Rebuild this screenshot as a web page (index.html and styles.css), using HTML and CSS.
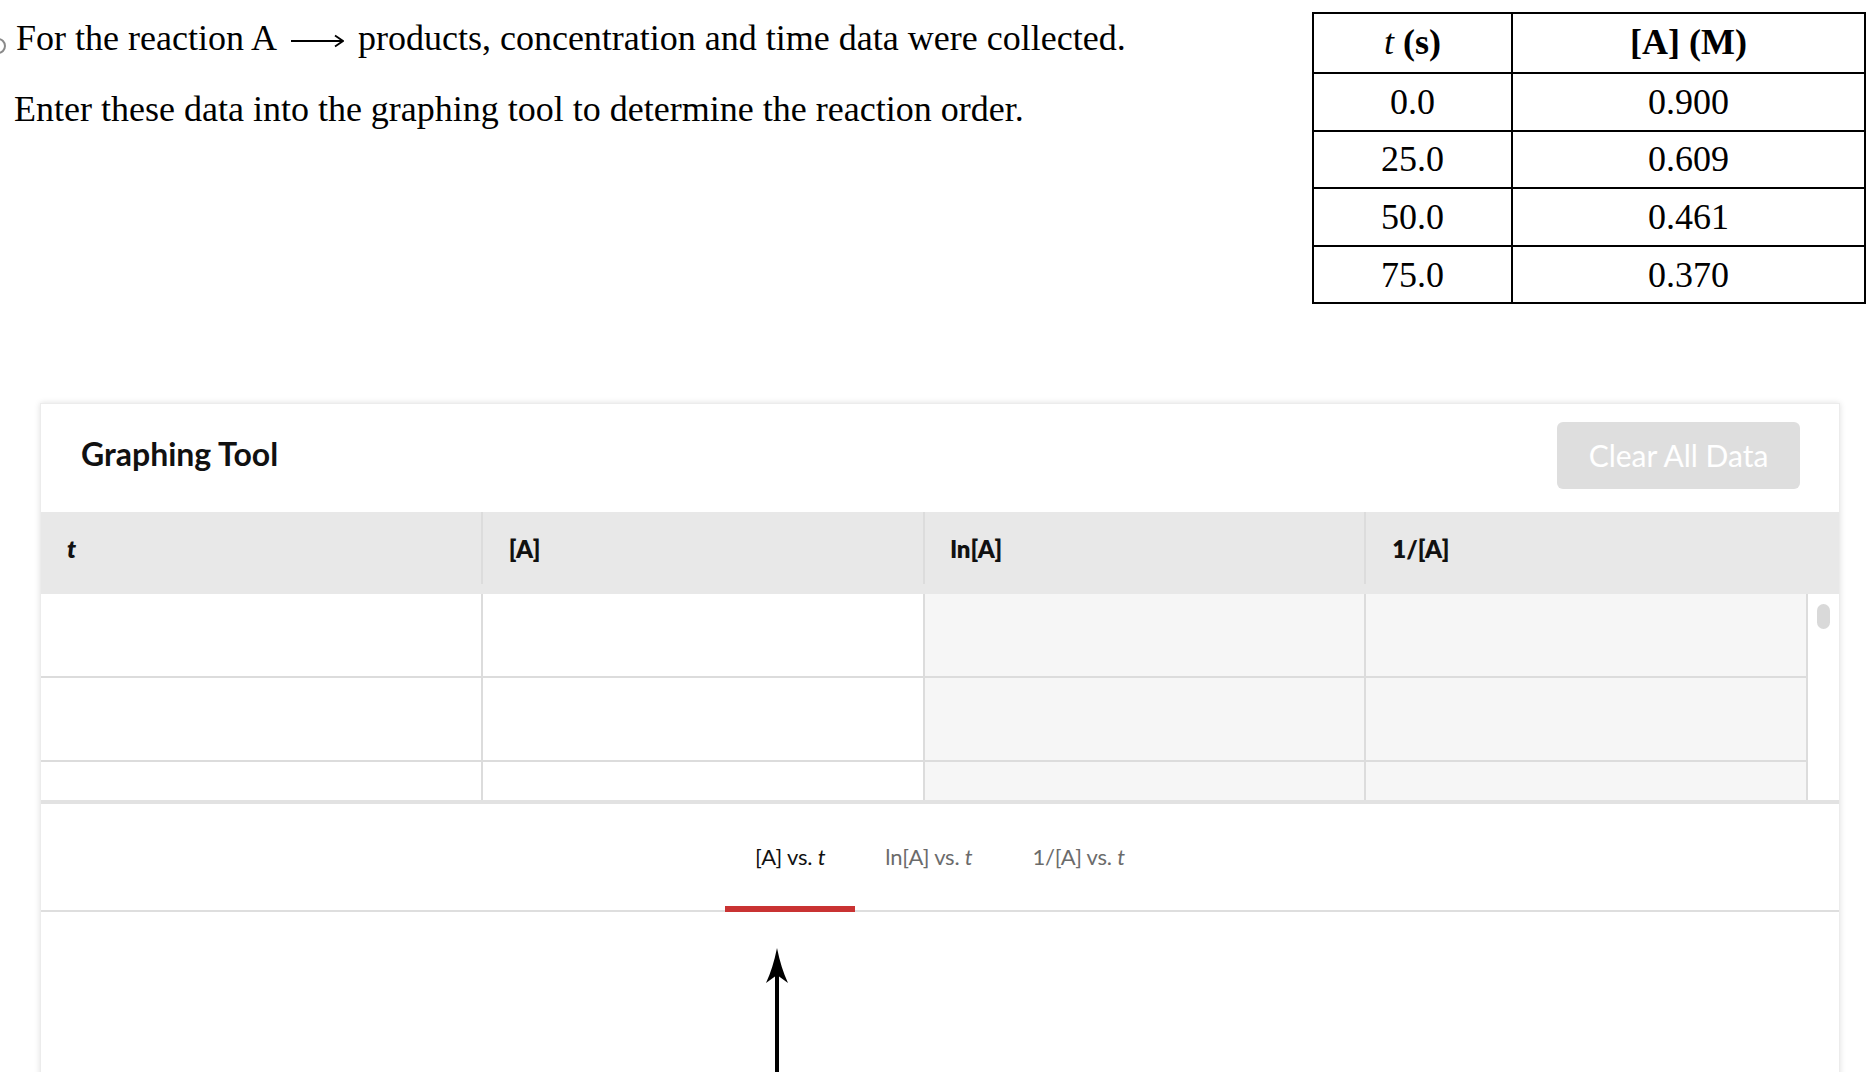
FILE: index.html
```html
<!DOCTYPE html>
<html lang="en">

<head>
    <meta charset="UTF-8" />
    <meta name="viewport" content="width=device-width, initial-scale=1.0" />
    <title>Reaction Order - Graphing Tool</title>
    <link rel="stylesheet" href="styles.css">
</head>

<body>
    <!-- Question text + data -->
    <div class="top">
        <div class="question">
            <p class="line"><span class="radio"></span>For the reaction A <svg class="yields" width="54" height="14" viewBox="0 0 54 14"><path d="M1 7 H52" stroke="#000" stroke-width="2" /><path d="M45 1.5 L53 7 L45 12.5" fill="none" stroke="#000" stroke-width="1.8" /></svg> products, concentration and time data were collected.</p>
            <p class="line">Enter these data into the graphing tool to determine the reaction order.</p>
        </div>

        <table class="data">
            <tr>
                <th><i class="var">t</i> (s)</th>
                <th>[A] (M)</th>
            </tr>
            <tr><td>0.0</td><td>0.900</td></tr>
            <tr><td>25.0</td><td>0.609</td></tr>
            <tr><td>50.0</td><td>0.461</td></tr>
            <tr><td>75.0</td><td>0.370</td></tr>
        </table>
    </div>

    <!-- Graphing Tool -->
    <section class="tool">
        <header class="tool-head">
            <h2 class="tool-title">Graphing Tool</h2>
            <button class="clear-btn" disabled>Clear All Data</button>
        </header>

        <div class="grid-head">
            <div class="hcell"><i>t</i></div>
            <div class="hcell">[A]</div>
            <div class="hcell">ln[A]</div>
            <div class="hcell last">1/[A]</div>
        </div>

        <div class="grid-body">
            <div class="rows">
                <div class="row">
                    <div class="cell"></div>
                    <div class="cell"></div>
                    <div class="cell calc"></div>
                    <div class="cell calc"></div>
                </div>
                <div class="row">
                    <div class="cell"></div>
                    <div class="cell"></div>
                    <div class="cell calc"></div>
                    <div class="cell calc"></div>
                </div>
                <div class="row">
                    <div class="cell"></div>
                    <div class="cell"></div>
                    <div class="cell calc"></div>
                    <div class="cell calc"></div>
                </div>
            </div>
            <div class="track">
                <div class="thumb"></div>
            </div>
        </div>

        <nav class="tabs">
            <span class="tab active">[A] vs.&nbsp;<i>t</i></span>
            <span class="tab">ln[A] vs.&nbsp;<i>t</i></span>
            <span class="tab">1/[A] vs.&nbsp;<i>t</i></span>
        </nav>

        <div class="plot">
            <svg class="axes" width="1798" height="170" viewBox="0 0 1798 170">
                <!-- y axis -->
                <line x1="736" y1="60" x2="736" y2="170" stroke="#000" stroke-width="4" />
                <path d="M736 36 Q740 56 747 71 L736 63 L725 71 Q732 56 736 36 Z" fill="#000" />
            </svg>
        </div>
    </section>
</body>

</html>
```

FILE: styles.css
```css
html,
body {
    margin: 0;
    padding: 0;
    background: #fff;
    overflow: hidden;
}

body {
    font-family: "Liberation Serif", "Times New Roman", serif;
    color: #000;
}

/* question block */
.top {
    display: flex;
    justify-content: space-between;
    align-items: flex-start;
}

.question {
    padding: 16px 0 0 14px;
}

.line {
    margin: 0 0 27px 0;
    font-size: 36px;
    line-height: 44px;
    white-space: nowrap;
}

.radio {
    display: inline-block;
    width: 12px;
    height: 12px;
    border: 2px solid #8a8a8a;
    border-radius: 50%;
    margin-left: -24px;
    margin-right: 10px;
    vertical-align: -4px;
}

.yields {
    margin: 0 5px 0 6px;
    vertical-align: 2px;
}

.data {
    border-collapse: collapse;
    margin: 12px 10px 0 0;
    font-size: 36px;
}

.data th,
.data td {
    border: 2px solid #000;
    text-align: center;
    padding: 0;
}

.data th {
    height: 56px;
    font-weight: bold;
    padding-bottom: 2px;
}

.data td {
    height: 55.6px;
    font-weight: normal;
}

.data th:first-child,
.data td:first-child {
    width: 197px;
}

.data th:last-child,
.data td:last-child {
    width: 351px;
}

.data .var {
    font-weight: normal;
}

/* graphing tool panel */
.tool {
    margin: 99px 0 0 40px;
    width: 1800px;
    box-sizing: border-box;
    border: 1px solid #ececec;
    box-shadow: 0 0 6px rgba(0, 0, 0, 0.13);
    font-family: Lato, "Open Sans", sans-serif;
}

.tool-head {
    height: 108px;
    box-sizing: border-box;
    display: flex;
    align-items: center;
    justify-content: space-between;
    padding: 0 39px 6px 40px;
}

.tool-title {
    margin: 0 0 3px 0;
    font-size: 32px;
    font-weight: 700;
    color: #111;
}

.clear-btn {
    width: 243px;
    height: 67px;
    border: none;
    border-radius: 6px;
    background: #dedede;
    color: #fff;
    font-family: Lato, "Open Sans", sans-serif;
    font-size: 30px;
}

.grid-head {
    display: grid;
    grid-template-columns: 441.75px 441.75px 441.75px 1fr;
    height: 82px;
    background: #e8e8e8;
}

.hcell {
    display: flex;
    align-items: center;
    padding-left: 26px;
    font-size: 24px;
    font-weight: 800;
    color: #111;
    border-right: 2px solid #dcdcdc;
    margin-bottom: 10px;
}

.hcell.last {
    border-right: none;
}

.grid-body {
    display: flex;
    height: 206px;
    border-bottom: 4px solid #e2e2e2;
}

.rows {
    width: 1767px;
    overflow: hidden;
}

.row {
    display: grid;
    grid-template-columns: repeat(4, 1fr);
}

.cell {
    height: 82px;
    background: #fff;
    border-right: 2px solid #dcdcdc;
    border-bottom: 2px solid #dcdcdc;
}

.cell.calc {
    background: #f6f6f6;
}

.track {
    flex: 1;
    background: #fff;
}

.thumb {
    width: 13px;
    height: 25px;
    margin: 10px 0 0 9px;
    border-radius: 7px;
    background: #d9d9d9;
}

/* chart tabs */
.tabs {
    display: flex;
    justify-content: center;
    height: 106px;
    border-bottom: 2px solid #dedede;
}

.tab {
    display: flex;
    align-items: center;
    box-sizing: border-box;
    height: 108px;
    margin-bottom: -2px;
    padding: 2px 30px 0 30px;
    border-bottom: 6px solid transparent;
    font-size: 22px;
    letter-spacing: -0.2px;
    color: #6b6b6b;
}

.tab.active {
    color: #111;
    border-bottom-color: #c93232;
}

.plot {
    height: 170px;
}

.axes {
    display: block;
}
```
